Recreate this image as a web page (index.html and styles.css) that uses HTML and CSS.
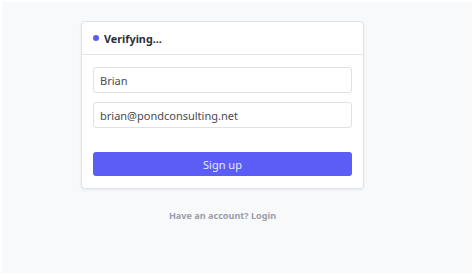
FILE: index.html
```html
<!DOCTYPE html>
<html>
<head>
<meta charset="utf-8">
<link rel="stylesheet" href="styles.css">
</head>
<body>
<div class="page">
  <div class="column">
    <div class="card">
      <div class="card-header">
        <span class="dot"></span>
        <span class="title">Verifying...</span>
      </div>
      <div class="card-body">
        <div class="input">Brian</div>
        <div class="input">brian@pondconsulting.net</div>
        <button class="btn">Sign up</button>
      </div>
    </div>
    <div class="footer">Have an account? Login</div>
  </div>
</div>
</body>
</html>
```
FILE: styles.css
```css
html, body {
  margin: 0;
  padding: 0;
  background: #ffffff;
}
body {
  font-family: "Noto Sans", "Open Sans", sans-serif;
  width: 474px;
  height: 276px;
  overflow: hidden;
}
.page {
  margin: 2px;
  height: 271px;
  background: #f8f9fb;
  padding-top: 19px;
  box-sizing: border-box;
}
.column {
  margin-left: 79px;
  width: 283px;
}
.card {
  background: #ffffff;
  border: 1px solid #e1e3e7;
  border-radius: 4px;
  box-shadow: 0 1px 3px rgba(0, 0, 0, 0.07);
}
.card-header {
  height: 32px;
  border-bottom: 1px solid #e3e5e9;
  display: flex;
  align-items: center;
  padding: 0 11px;
  gap: 5px;
}
.dot {
  width: 6px;
  height: 6px;
  border-radius: 50%;
  background: #5b5cf0;
}
.title {
  font-size: 10.8px;
  font-weight: 700;
  color: #2b2d38;
}
.card-body {
  padding: 12px 11px 12px;
  display: flex;
  flex-direction: column;
}
.input {
  height: 26px;
  box-sizing: border-box;
  border: 1px solid #dfe1e5;
  border-radius: 3px;
  padding: 0 6px;
  display: flex;
  align-items: center;
  font-size: 11px;
  color: #4a4a50;
}
.input + .input {
  margin-top: 9px;
}
.btn {
  margin-top: 24px;
  height: 24px;
  border: none;
  border-radius: 3px;
  background: #5b5ef6;
  color: #e8e9ff;
  font-family: inherit;
  font-size: 11px;
  padding: 0;
}
.footer {
  margin-top: 20px;
  text-align: center;
  font-size: 9.1px;
  font-weight: 700;
  color: #9a9ea8;
}
```
